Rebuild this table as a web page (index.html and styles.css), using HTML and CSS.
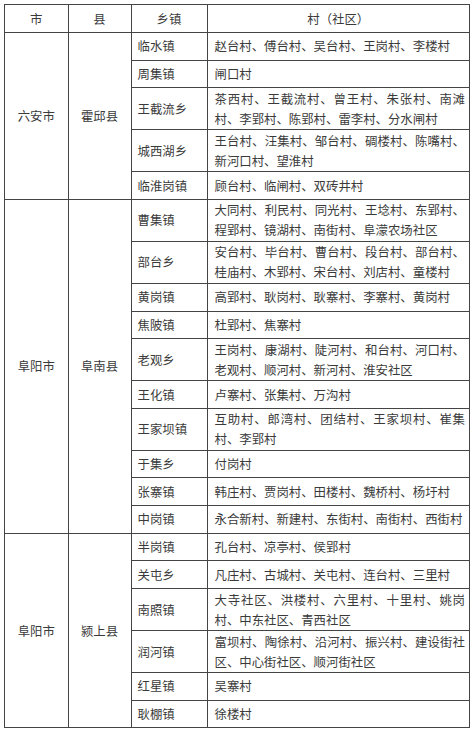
FILE: index.html
```html
<!DOCTYPE html>
<html lang="zh-CN">
<head>
<meta charset="utf-8">
<title>村（社区）名单</title>
<link rel="stylesheet" href="styles.css">
</head>
<body>
<table class="list">
  <colgroup>
    <col class="c-city">
    <col class="c-county">
    <col class="c-town">
    <col class="c-village">
  </colgroup>
  <thead>
    <tr class="head">
      <th>市</th><th>县</th><th>乡镇</th><th>村（社区）</th>
    </tr>
  </thead>
  <tbody>
    <tr class="s"><td class="ctr" rowspan="5">六安市</td><td class="ctr" rowspan="5">霍邱县</td><td class="town">临水镇</td><td class="vil">赵台村、傅台村、吴台村、王岗村、李楼村</td></tr>
    <tr class="s"><td class="town">周集镇</td><td class="vil">闸口村</td></tr>
    <tr class="d"><td class="town">王截流乡</td><td class="vil">茶西村、王截流村、曾王村、朱张村、南滩村、李郢村、陈郢村、雷李村、分水闸村</td></tr>
    <tr class="d"><td class="town">城西湖乡</td><td class="vil">王台村、汪集村、邹台村、碉楼村、陈嘴村、新河口村、望淮村</td></tr>
    <tr class="s"><td class="town">临淮岗镇</td><td class="vil">顾台村、临闸村、双砖井村</td></tr>

    <tr class="d"><td class="ctr" rowspan="10">阜阳市</td><td class="ctr" rowspan="10">阜南县</td><td class="town">曹集镇</td><td class="vil">大同村、利民村、同光村、王埝村、东郢村、程郢村、镜湖村、南街村、阜濛农场社区</td></tr>
    <tr class="d"><td class="town">部台乡</td><td class="vil">安台村、毕台村、曹台村、段台村、部台村、桂庙村、木郢村、宋台村、刘店村、童楼村</td></tr>
    <tr class="s"><td class="town">黄岗镇</td><td class="vil">高郢村、耿岗村、耿寨村、李寨村、黄岗村</td></tr>
    <tr class="s"><td class="town">焦陂镇</td><td class="vil">杜郢村、焦寨村</td></tr>
    <tr class="d"><td class="town">老观乡</td><td class="vil">王岗村、康湖村、陡河村、和台村、河口村、老观村、顺河村、新河村、淮安社区</td></tr>
    <tr class="s"><td class="town">王化镇</td><td class="vil">卢寨村、张集村、万沟村</td></tr>
    <tr class="d"><td class="town">王家坝镇</td><td class="vil">互助村、郎湾村、团结村、王家坝村、崔集村、李郢村</td></tr>
    <tr class="s"><td class="town">于集乡</td><td class="vil">付岗村</td></tr>
    <tr class="s"><td class="town">张寨镇</td><td class="vil">韩庄村、贾岗村、田楼村、魏桥村、杨圩村</td></tr>
    <tr class="s"><td class="town">中岗镇</td><td class="vil">永合新村、新建村、东街村、南街村、西街村</td></tr>

    <tr class="s"><td class="ctr" rowspan="6">阜阳市</td><td class="ctr" rowspan="6">颍上县</td><td class="town">半岗镇</td><td class="vil">孔台村、凉亭村、侯郢村</td></tr>
    <tr class="s"><td class="town">关屯乡</td><td class="vil">凡庄村、古城村、关屯村、连台村、三里村</td></tr>
    <tr class="d"><td class="town">南照镇</td><td class="vil">大寺社区、洪楼村、六里村、十里村、姚岗村、中东社区、青西社区</td></tr>
    <tr class="d"><td class="town">润河镇</td><td class="vil">富坝村、陶徐村、沿河村、振兴村、建设街社区、中心街社区、顺河街社区</td></tr>
    <tr class="s"><td class="town">红星镇</td><td class="vil">吴寨村</td></tr>
    <tr class="s"><td class="town">耿棚镇</td><td class="vil">徐楼村</td></tr>
  </tbody>
</table>
</body>
</html>
```
FILE: styles.css
```css
html, body {
  margin: 0;
  padding: 0;
  background: #ffffff;
}

body {
  font-family: "Noto Sans CJK SC", "Noto Sans", sans-serif;
  font-size: 12.4px;
  color: #3a3a3a;
}

.list {
  border-collapse: collapse;
  table-layout: fixed;
  width: 465px;
  margin: 4px 0 0 4px;
}

.c-city { width: 63.5px; }
.c-county { width: 63px; }
.c-town { width: 76px; }
.c-village { width: 262.5px; }

.list th,
.list td {
  border: 1px solid #444444;
  line-height: 20px;
  vertical-align: middle;
  font-weight: normal;
  padding: 0;
  word-break: break-all;
  line-break: strict;
}

.list th {
  text-align: center;
}

.head { height: 28px; }
.s { height: 27.65px; }
.d { height: 42px; }

.list .ctr {
  text-align: center;
}

.list .town {
  padding-left: 6px;
  text-align: left;
  white-space: nowrap;
}

.list .vil {
  padding: 0 4px 0 7px;
  text-align: justify;
}
```
